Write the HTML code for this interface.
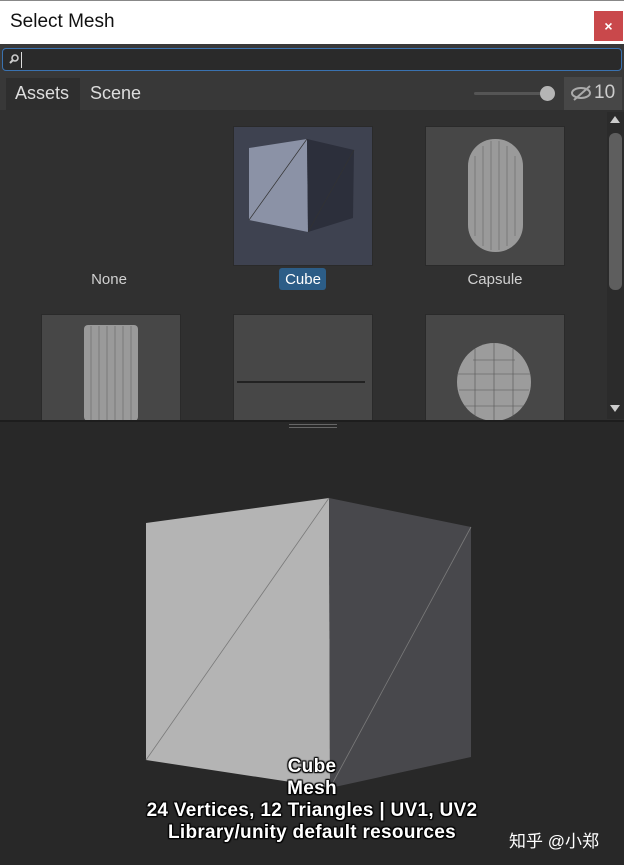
<!DOCTYPE html>
<html><head><meta charset="utf-8"><style>
*{margin:0;padding:0;box-sizing:border-box}
body{width:624px;height:865px;overflow:hidden;background:#282828;font-family:"Liberation Sans","Noto Sans CJK SC",sans-serif;position:relative}
.a{position:absolute}
.title{left:0;top:0;width:624px;height:44px;background:#fff;border-top:1px solid #888}
.title span{position:absolute;left:10px;top:10px;font-size:19px;color:#111}
.x{left:594px;top:11px;width:29px;height:30px;background:#c9484b;color:#fff;font-size:14px;text-align:center;line-height:30px;font-weight:bold}
.tb{left:0;top:44px;width:624px;height:66px;background:#383838}
.search{left:2px;top:48px;width:620px;height:23px;background:#2a2a2a;border:1px solid #3a72b0;border-radius:4px}
.grid{left:0;top:110px;width:624px;height:311px;background:#303030}
.th{width:140px;height:140px;background:#474747;border:1px solid #2a2a2a}
.lbl{font-size:15px;color:#d0d0d0;text-align:center;width:140px}
.txt{left:0;width:624px;text-align:center;color:#fff;font-weight:bold;font-size:19px;letter-spacing:.3px;text-shadow:0 0 2px #000,1px 1px 1px #000,-1px -1px 1px #000,1px -1px 1px #000,-1px 1px 1px #000}
</style></head><body>
<div class="a title"><span>Select Mesh</span></div>
<div class="a x">×</div>
<div class="a tb"></div>
<div class="a search"><svg class="a" style="left:5px;top:4px" width="12" height="12" viewBox="0 0 12 12"><circle cx="7" cy="5" r="3" fill="none" stroke="#ccc" stroke-width="1.6"/><path d="M5 7L2 10" stroke="#ccc" stroke-width="2"/></svg><div class="a" style="left:18px;top:3px;width:1px;height:16px;background:#ddd"></div></div>
<div class="a" style="left:6px;top:78px;width:74px;height:32px;background:#2e2e2e"></div>
<div class="a" style="left:15px;top:83px;font-size:18px;color:#ddd">Assets</div>
<div class="a" style="left:90px;top:83px;font-size:18px;color:#ddd">Scene</div>
<div class="a" style="left:474px;top:92px;width:70px;height:3px;background:#555;border-radius:2px"></div>
<div class="a" style="left:540px;top:86px;width:15px;height:15px;background:#b5b5b5;border-radius:50%"></div>
<div class="a" style="left:564px;top:77px;width:58px;height:33px;background:#474747"></div>
<svg class="a" style="left:570px;top:84px" width="24" height="18" viewBox="0 0 24 18"><ellipse cx="11" cy="9" rx="9" ry="5" fill="none" stroke="#aaa" stroke-width="2"/><path d="M4 16L20 2" stroke="#aaa" stroke-width="2"/></svg>
<div class="a" style="left:594px;top:82px;font-size:19px;color:#ccc">10</div>
<div class="a grid"></div>
<div class="a" style="left:607px;top:112px;width:17px;height:307px;background:#2b2b2b"></div>
<div class="a" style="left:609px;top:133px;width:13px;height:157px;background:#5e5e5e;border-radius:6px"></div>
<div class="a" style="left:610px;top:116px;width:0;height:0;border-left:5px solid transparent;border-right:5px solid transparent;border-bottom:7px solid #ccc"></div>
<div class="a" style="left:610px;top:405px;width:0;height:0;border-left:5px solid transparent;border-right:5px solid transparent;border-top:7px solid #ccc"></div>
<div class="a lbl" style="left:39px;top:271px">None</div>
<div class="a th" style="left:233px;top:126px;background:#3e4250"></div>
<svg class="a" style="left:233px;top:126px" width="140" height="140"><polygon points="16,22 74,13 75,106 16,94" fill="#8b92a6"/><polygon points="74,13 121,24 120,92 75,106" fill="#2c2f3b"/><path d="M74 13L16 94M121 24L75 106" stroke="#333" stroke-width=".7"/></svg>
<div class="a" style="left:279px;top:268px;width:47px;height:22px;background:#2c5d87;border-radius:3px"></div>
<div class="a lbl" style="left:233px;top:271px;color:#fff">Cube</div>
<div class="a th" style="left:425px;top:126px"></div>
<svg class="a" style="left:425px;top:126px" width="140" height="140"><rect x="43" y="13" width="55" height="113" rx="27" fill="#9a9a9a"/><path d="M50 30V110M58 20V120M66 15V124M74 15V124M82 20V120M90 30V110" stroke="#666" stroke-width=".6"/></svg>
<div class="a lbl" style="left:425px;top:271px">Capsule</div>
<div class="a th" style="left:41px;top:314px;height:107px"></div>
<svg class="a" style="left:41px;top:314px" width="140" height="107"><rect x="43" y="11" width="54" height="96" rx="4" fill="#9a9a9a"/><path d="M50 12V107M58 12V107M66 12V107M74 12V107M82 12V107M90 12V107" stroke="#666" stroke-width=".6"/></svg>
<div class="a th" style="left:233px;top:314px;height:107px"></div>
<div class="a" style="left:237px;top:381px;width:128px;height:2px;background:#222"></div>
<div class="a th" style="left:425px;top:314px;height:107px"></div>
<svg class="a" style="left:425px;top:314px" width="140" height="107"><ellipse cx="69" cy="68" rx="37" ry="39" fill="#9c9c9c"/><path d="M33 60H105M34 76H104M40 92H98M48 46H90M69 29V107M50 35V103M88 35V103" stroke="#555" stroke-width=".6"/></svg>
<div class="a" style="left:0;top:420px;width:624px;height:2px;background:#1d1d1d"></div>
<div class="a" style="left:289px;top:424px;width:48px;height:1px;background:#666"></div>
<div class="a" style="left:289px;top:427px;width:48px;height:1px;background:#666"></div>
<svg class="a" style="left:0;top:422px" width="624" height="443"><polygon points="146,101 329,76 330,366 146,338" fill="#b4b4b4"/><polygon points="329,76 471,105 471,335 330,366" fill="#48484c"/><path d="M329 76L146 338M471 105L330 366" stroke="#7a7a7a" stroke-width=".8"/></svg>
<div class="a txt" style="top:756px">Cube</div>
<div class="a txt" style="top:778px">Mesh</div>
<div class="a txt" style="top:800px">24 Vertices, 12 Triangles | UV1, UV2</div>
<div class="a txt" style="top:822px">Library/unity default resources</div>
<div class="a" style="left:509px;top:827px;font-size:17px;color:#fff">知乎 @小郑</div>
</body></html>
